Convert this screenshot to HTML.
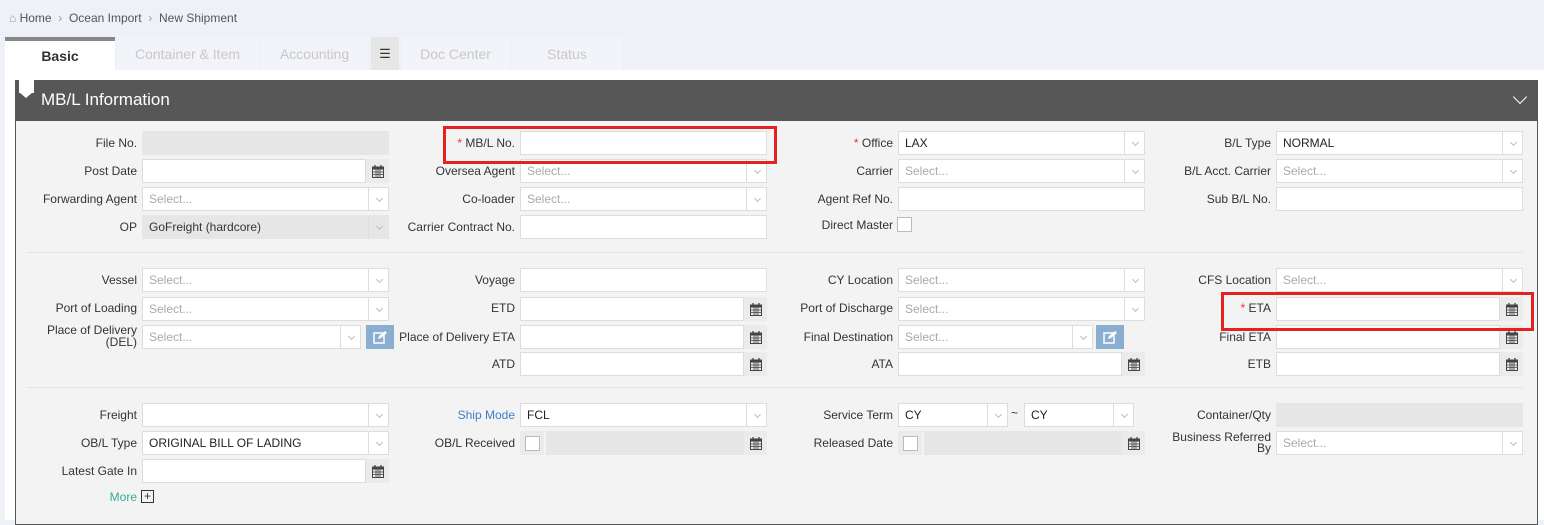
<!DOCTYPE html>
<html><head><meta charset="utf-8"><style>
*{box-sizing:border-box;margin:0;padding:0}
body{width:1544px;height:520px;overflow:hidden;background:#eef1f8;font-family:"Liberation Sans",sans-serif;font-size:12px;color:#333;position:relative}
.a{position:absolute}
.l{position:absolute;text-align:right;font-size:12px;color:#333;line-height:14px}
.i{position:absolute;height:24px;background:#fff;border:1px solid #ddd;font-size:12px;line-height:22px;padding-left:6px;color:#222}
.d{background:#e6e6e6;border-color:#e6e6e6}
.s{color:#aaa}
.s::after,.v::after{content:"";position:absolute;right:0;top:0;width:19px;height:22px;border-left:1px solid #ddd}
.ch{position:absolute;right:6px;top:8px;width:5px;height:5px;border-right:1px solid #bbb;border-bottom:1px solid #bbb;transform:rotate(45deg)}
.cal{position:absolute;width:23px;height:24px;background:#ebebeb;display:flex;align-items:center;justify-content:center}
.req{color:#e33}
.tab{position:absolute;top:37px;height:33px;background:#f3f4f9;color:#c8c8c8;font-size:14px;text-align:center;line-height:34px}
.ed{position:absolute;width:28px;height:24px;background:#8aaed0;display:flex;align-items:center;justify-content:center}
.cb{position:absolute;width:15px;height:15px;background:#fff;border:1px solid #bbb}
.red{position:absolute;border:3px solid #e52222}
</style></head><body>
<svg width="0" height="0" style="position:absolute"><defs><symbol id="c" viewBox="0 0 12 13"><rect x="0.5" y="2" width="11" height="10.5" fill="none" stroke="#444"/><rect x="0.5" y="2" width="11" height="2.5" fill="#444"/><path d="M3 0v3M9 0v3" stroke="#444" stroke-width="1.3"/><path d="M4 4.5v8M6 4.5v8M8 4.5v8M0.5 7h11M0.5 9.5h11" stroke="#444" stroke-width="0.8"/></symbol></defs></svg>

<div class="a" style="left:9px;top:11px;font-size:12px;color:#555"><span style="color:#999">&#8962;</span> Home <span style="color:#999">&nbsp;&rsaquo;&nbsp;</span> Ocean Import <span style="color:#999">&nbsp;&rsaquo;&nbsp;</span> New Shipment</div>

<div class="a" style="left:5px;top:70px;width:1539px;height:450px;background:#fff"></div>
<div class="tab" style="left:5px;width:110px;background:#fff;color:#333;font-weight:bold;border-top:4px solid #888;line-height:30px">Basic</div>
<div class="tab" style="left:117px;width:141px">Container &amp; Item</div>
<div class="tab" style="left:261px;width:107px">Accounting</div>
<div class="tab" style="left:371px;width:28px;background:#e6e6e6;color:#333;font-size:13px">&#9776;</div>
<div class="tab" style="left:402px;width:107px">Doc Center</div>
<div class="tab" style="left:512px;width:110px">Status</div>

<div class="a" style="left:15px;top:80px;width:1523px;height:445px;background:#f3f3f3;border:1px solid #555"></div>
<div class="a" style="left:15px;top:80px;width:1523px;height:41px;background:#575757"></div>
<div class="a" style="left:19px;top:80px;width:15px;height:13px;background:#fff"></div>
<div class="a" style="left:19px;top:92px;width:0;height:0;border-left:7.5px solid transparent;border-right:7.5px solid transparent;border-top:6px solid #fff"></div>
<div class="a" style="left:41px;top:90px;font-size:17px;color:#fff">MB/L Information</div>
<div class="a" style="left:1515px;top:92px;width:10px;height:10px;border-right:1.5px solid #fff;border-bottom:1.5px solid #fff;transform:rotate(45deg)"></div>

<div class="a" style="left:27px;top:252px;width:1496px;height:1px;background:#e4e4e4"></div>
<div class="a" style="left:27px;top:387px;width:1496px;height:1px;background:#e4e4e4"></div>

<!-- group 1 -->
<div class="l" style="left:0;width:137px;top:136px">File No.</div>
<div class="i d" style="left:142px;top:131px;width:247px"></div>
<div class="l" style="left:0;width:137px;top:164px">Post Date</div>
<div class="i" style="left:142px;top:159px;width:224px"></div><div class="cal" style="left:366px;top:159px"><svg width="12" height="13"><use href="#c"/></svg></div>
<div class="l" style="left:0;width:137px;top:192px">Forwarding Agent</div>
<div class="i s" style="left:142px;top:187px;width:247px">Select...<i class="ch"></i></div>
<div class="l" style="left:0;width:137px;top:220px">OP</div>
<div class="i d v" style="left:142px;top:215px;width:247px;color:#333">GoFreight (hardcore)<i class="ch"></i></div>

<div class="l" style="left:380px;width:135px;top:136px"><span class="req">*</span> MB/L No.</div>
<div class="i" style="left:520px;top:131px;width:247px"></div>
<div class="l" style="left:380px;width:135px;top:164px">Oversea Agent</div>
<div class="i s" style="left:520px;top:159px;width:247px">Select...<i class="ch"></i></div>
<div class="l" style="left:380px;width:135px;top:192px">Co-loader</div>
<div class="i s" style="left:520px;top:187px;width:247px">Select...<i class="ch"></i></div>
<div class="l" style="left:380px;width:135px;top:220px">Carrier Contract No.</div>
<div class="i" style="left:520px;top:215px;width:247px"></div>

<div class="l" style="left:760px;width:133px;top:136px"><span class="req">*</span> Office</div>
<div class="i v" style="left:898px;top:131px;width:247px">LAX<i class="ch"></i></div>
<div class="l" style="left:760px;width:133px;top:164px">Carrier</div>
<div class="i s" style="left:898px;top:159px;width:247px">Select...<i class="ch"></i></div>
<div class="l" style="left:760px;width:133px;top:192px">Agent Ref No.</div>
<div class="i" style="left:898px;top:187px;width:247px"></div>
<div class="l" style="left:760px;width:133px;top:218px">Direct Master</div>
<div class="cb" style="left:897px;top:217px"></div>

<div class="l" style="left:1140px;width:131px;top:136px">B/L Type</div>
<div class="i v" style="left:1276px;top:131px;width:247px">NORMAL<i class="ch"></i></div>
<div class="l" style="left:1140px;width:131px;top:164px">B/L Acct. Carrier</div>
<div class="i s" style="left:1276px;top:159px;width:247px">Select...<i class="ch"></i></div>
<div class="l" style="left:1140px;width:131px;top:192px">Sub B/L No.</div>
<div class="i" style="left:1276px;top:187px;width:247px"></div>

<!-- group 2 -->
<div class="l" style="left:0;width:137px;top:273px">Vessel</div>
<div class="i s" style="left:142px;top:268px;width:247px">Select...<i class="ch"></i></div>
<div class="l" style="left:0;width:137px;top:301px">Port of Loading</div>
<div class="i s" style="left:142px;top:297px;width:247px">Select...<i class="ch"></i></div>
<div class="l" style="left:0;width:137px;top:324px;line-height:12px">Place of Delivery<br>(DEL)</div>
<div class="i s" style="left:142px;top:325px;width:219px">Select...<i class="ch"></i></div>
<div class="ed" style="left:366px;top:325px"><svg width="14" height="13" viewBox="0 0 14 13"><rect x="1" y="2" width="10" height="10" fill="none" stroke="#fff" stroke-width="1.5"/><path d="M5 8l1-3 6-5 2 2-6 5z" fill="#fff"/></svg></div>

<div class="l" style="left:380px;width:135px;top:273px">Voyage</div>
<div class="i" style="left:520px;top:268px;width:247px"></div>
<div class="l" style="left:380px;width:135px;top:301px">ETD</div>
<div class="i" style="left:520px;top:297px;width:224px"></div><div class="cal" style="left:744px;top:297px"><svg width="12" height="13"><use href="#c"/></svg></div>
<div class="l" style="left:380px;width:135px;top:330px">Place of Delivery ETA</div>
<div class="i" style="left:520px;top:325px;width:224px"></div><div class="cal" style="left:744px;top:325px"><svg width="12" height="13"><use href="#c"/></svg></div>
<div class="l" style="left:380px;width:135px;top:357px">ATD</div>
<div class="i" style="left:520px;top:352px;width:224px"></div><div class="cal" style="left:744px;top:352px"><svg width="12" height="13"><use href="#c"/></svg></div>

<div class="l" style="left:760px;width:133px;top:273px">CY Location</div>
<div class="i s" style="left:898px;top:268px;width:247px">Select...<i class="ch"></i></div>
<div class="l" style="left:760px;width:133px;top:301px">Port of Discharge</div>
<div class="i s" style="left:898px;top:297px;width:247px">Select...<i class="ch"></i></div>
<div class="l" style="left:760px;width:133px;top:330px">Final Destination</div>
<div class="i s" style="left:898px;top:325px;width:195px">Select...<i class="ch"></i></div>
<div class="ed" style="left:1096px;top:325px"><svg width="14" height="13" viewBox="0 0 14 13"><rect x="1" y="2" width="10" height="10" fill="none" stroke="#fff" stroke-width="1.5"/><path d="M5 8l1-3 6-5 2 2-6 5z" fill="#fff"/></svg></div>
<div class="l" style="left:760px;width:133px;top:357px">ATA</div>
<div class="i" style="left:898px;top:352px;width:224px"></div><div class="cal" style="left:1122px;top:352px"><svg width="12" height="13"><use href="#c"/></svg></div>

<div class="l" style="left:1140px;width:131px;top:273px">CFS Location</div>
<div class="i s" style="left:1276px;top:268px;width:247px">Select...<i class="ch"></i></div>
<div class="l" style="left:1140px;width:131px;top:301px"><span class="req">*</span> ETA</div>
<div class="i" style="left:1276px;top:297px;width:224px"></div><div class="cal" style="left:1500px;top:297px"><svg width="12" height="13"><use href="#c"/></svg></div>
<div class="l" style="left:1140px;width:131px;top:330px">Final ETA</div>
<div class="i" style="left:1276px;top:325px;width:224px"></div><div class="cal" style="left:1500px;top:325px"><svg width="12" height="13"><use href="#c"/></svg></div>
<div class="l" style="left:1140px;width:131px;top:357px">ETB</div>
<div class="i" style="left:1276px;top:352px;width:224px"></div><div class="cal" style="left:1500px;top:352px"><svg width="12" height="13"><use href="#c"/></svg></div>

<!-- group 3 -->
<div class="l" style="left:0;width:137px;top:408px">Freight</div>
<div class="i v" style="left:142px;top:403px;width:247px"><i class="ch"></i></div>
<div class="l" style="left:0;width:137px;top:436px">OB/L Type</div>
<div class="i v" style="left:142px;top:431px;width:247px">ORIGINAL BILL OF LADING<i class="ch"></i></div>
<div class="l" style="left:0;width:137px;top:464px">Latest Gate In</div>
<div class="i" style="left:142px;top:459px;width:224px"></div><div class="cal" style="left:366px;top:459px"><svg width="12" height="13"><use href="#c"/></svg></div>
<div class="l" style="left:0;width:137px;top:490px;color:#3aa89b">More</div>
<div class="a" style="left:141px;top:490px;width:13px;height:13px;border:1px solid #333;font-size:12px;line-height:10px;text-align:center">+</div>

<div class="l" style="left:380px;width:135px;top:408px;color:#3a7fc8">Ship Mode</div>
<div class="i v" style="left:520px;top:403px;width:247px">FCL<i class="ch"></i></div>
<div class="l" style="left:380px;width:135px;top:436px">OB/L Received</div>
<div class="a" style="left:520px;top:431px;width:24px;height:24px;background:#ebebeb"></div><div class="cb" style="left:525px;top:436px"></div>
<div class="i d" style="left:546px;top:431px;width:198px"></div><div class="cal" style="left:744px;top:431px"><svg width="12" height="13"><use href="#c"/></svg></div>

<div class="l" style="left:760px;width:133px;top:408px">Service Term</div>
<div class="i v" style="left:898px;top:403px;width:110px">CY<i class="ch"></i></div>
<div class="a" style="left:1011px;top:406px;font-size:12px">~</div>
<div class="i v" style="left:1024px;top:403px;width:110px">CY<i class="ch"></i></div>
<div class="l" style="left:760px;width:133px;top:436px">Released Date</div>
<div class="a" style="left:898px;top:431px;width:24px;height:24px;background:#ebebeb"></div><div class="cb" style="left:903px;top:436px"></div>
<div class="i d" style="left:924px;top:431px;width:198px"></div><div class="cal" style="left:1122px;top:431px"><svg width="12" height="13"><use href="#c"/></svg></div>

<div class="l" style="left:1140px;width:131px;top:408px">Container/Qty</div>
<div class="i d" style="left:1276px;top:403px;width:247px"></div>
<div class="l" style="left:1140px;width:131px;top:432px;line-height:11px">Business Referred<br>By</div>
<div class="i s" style="left:1276px;top:431px;width:247px">Select...<i class="ch"></i></div>

<div class="red" style="left:443px;top:126px;width:334px;height:38px"></div>
<div class="red" style="left:1221px;top:292px;width:313px;height:39px"></div>
</body></html>
